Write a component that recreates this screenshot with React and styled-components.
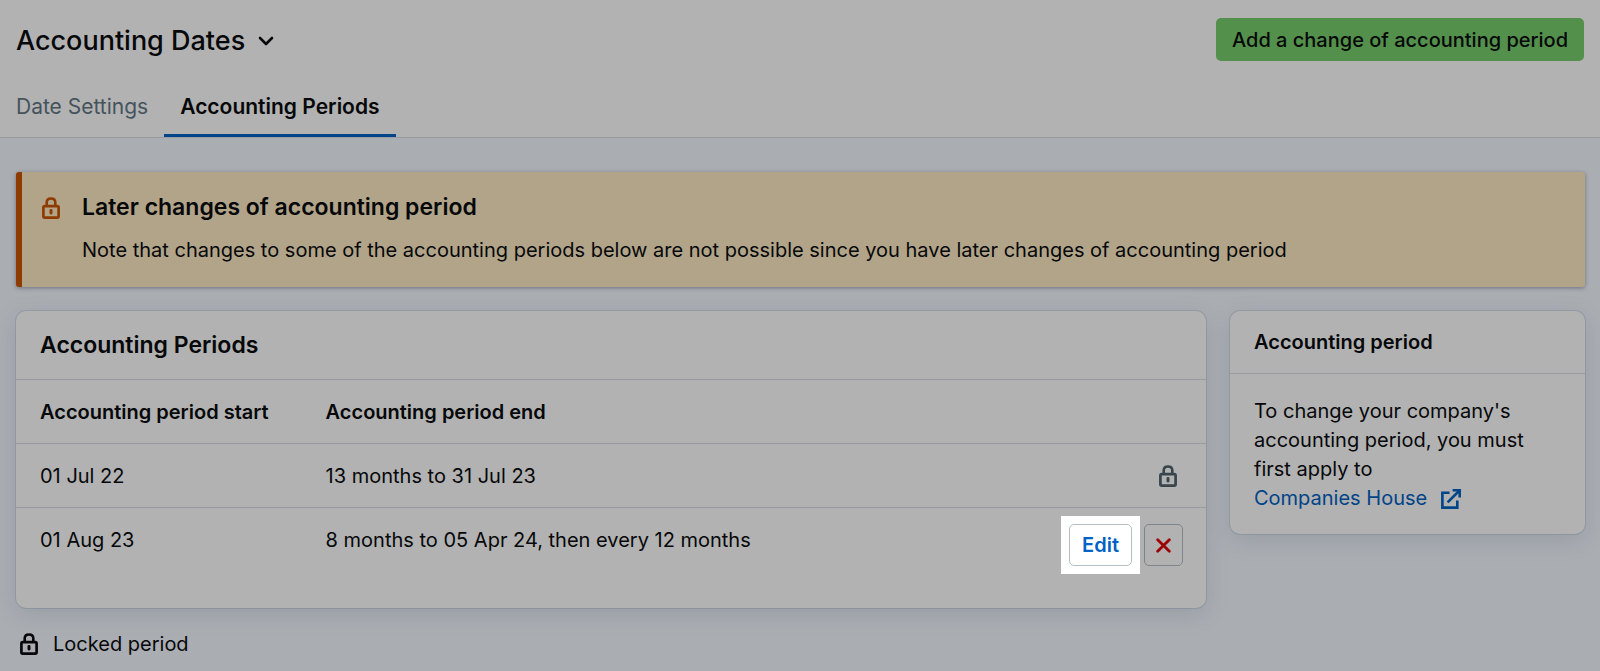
import React from 'react';
import styled, { createGlobalStyle } from 'styled-components';

const colors = {
  text: '#0a0c0e',
  muted: '#637785',
  icon: '#51636f',
  link: '#0062c4',
  line: '#dddfe6',
  page: '#f4f8ff',
  green: '#78cf6c',
  orange: '#cc5500',
  notice: '#ffebc5',
  red: '#e00008',
};

const GlobalStyle = createGlobalStyle`
  *, *::before, *::after {
    box-sizing: border-box;
  }

  body {
    margin: 0;
    background: ${colors.page};
    color: ${colors.text};
    font-family: Inter, 'Liberation Sans', sans-serif;
    font-size: 20px;
    line-height: 28px;
  }

  h1, h2, h3, p {
    margin: 0;
  }

  button {
    font: inherit;
    cursor: pointer;
  }

  svg {
    display: block;
    flex: none;
  }
`;

const Page = styled.div`
  min-height: 100vh;
  overflow: hidden;
`;

const Header = styled.header`
  padding: 18px 16px 0;
  background: #fff;
  border-bottom: 1px solid ${colors.line};
`;

const TitleBar = styled.div`
  display: flex;
  align-items: flex-start;
  justify-content: space-between;
  gap: 24px;
`;

const TitleButton = styled.button`
  display: flex;
  align-items: center;
  gap: 13px;
  padding: 0;
  border: 0;
  background: none;
  color: inherit;
`;

const Title = styled.h1`
  font-size: 27px;
  line-height: 46px;
  font-weight: 500;
`;

const PrimaryButton = styled.button`
  height: 43px;
  padding: 0 16px;
  border: 0;
  border-radius: 5px;
  background: ${colors.green};
  color: ${colors.text};
  font-weight: 500;
`;

const Tabs = styled.nav`
  display: flex;
  margin-top: 15px;
`;

const Tab = styled.a`
  padding: 14px 16px 13px;
  border-bottom: 3px solid ${props => props.$active ? colors.link : 'transparent'};
  color: ${props => props.$active ? colors.text : colors.muted};
  font-size: 21px;
  font-weight: ${props => props.$active ? 600 : 400};
  text-decoration: none;

  &:first-child {
    padding-left: 0;
  }
`;

const Main = styled.main`
  padding: 34px 15px 12px 16px;
`;

const Notice = styled.section`
  display: flex;
  gap: 22px;
  padding: 21px 20px 23px;
  border-left: 6px solid ${colors.orange};
  border-radius: 3px;
  background: ${colors.notice};
  box-shadow: 0 1px 4px rgba(30, 40, 60, 0.4);
`;

const NoticeIcon = styled.div`
  padding-top: 4px;
  color: ${colors.orange};
`;

const NoticeTitle = styled.h2`
  margin-bottom: 15px;
  font-size: 23px;
  line-height: 28px;
  font-weight: 600;
`;

const Columns = styled.div`
  display: grid;
  grid-template-columns: minmax(0, 1fr) 355px;
  align-items: start;
  gap: 24px;
  margin-top: 24px;
`;

const Card = styled.section`
  border-radius: 10px;
  background: #fff;
  box-shadow: 0 0 0 1px rgba(90, 110, 150, 0.16), 0 6px 24px rgba(60, 90, 130, 0.14);
`;

const CardTitle = styled.h2`
  padding: 20px 24px;
  font-size: 23px;
  line-height: 28px;
  font-weight: 600;
`;

const SideTitle = styled.h3`
  padding: 17px 24px;
  border-bottom: 1px solid ${colors.line};
  font-size: 20px;
  font-weight: 600;
`;

const SideText = styled.p`
  padding: 23px 24px 21px;
  line-height: 29px;
`;

const ExternalLink = styled.a`
  display: inline-flex;
  align-items: center;
  gap: 14px;
  color: ${colors.link};
  text-decoration: none;
  white-space: nowrap;
  vertical-align: top;
`;

const Table = styled.table`
  width: 100%;
  border-collapse: collapse;
  table-layout: fixed;

  th, td {
    padding: 18px 24px 17px;
    border-top: 1px solid ${colors.line};
    text-align: left;
    vertical-align: top;
  }

  th {
    font-weight: 600;
  }

  th:first-child {
    width: 24%;
  }

  th:last-child {
    width: 16%;
  }

  td:last-child {
    padding: 8px 23px 17px 0;
  }

  tbody tr:last-child td {
    padding-bottom: 34px;
  }
`;

const RowLock = styled.div`
  display: flex;
  justify-content: flex-end;
  padding: 13px 6px 0 0;
  color: ${colors.icon};
`;

const Actions = styled.div`
  display: flex;
  align-items: center;
  justify-content: flex-end;
  gap: 4px;
`;

// White cut-out around the highlighted control; everything outside is dimmed
const Spotlight = styled.div`
  position: relative;
  z-index: 10;
  padding: 8px;
  background: #fff;
  box-shadow: 0 0 0 200vmax rgba(0, 0, 0, 0.3);
`;

const SmallButton = styled.button`
  display: flex;
  align-items: center;
  justify-content: center;
  height: 42px;
  padding: 0 ${props => props.$danger ? 11 : 12}px;
  border: 1px solid #b3bfc7;
  border-radius: 5px;
  background: #fff;
  color: ${props => props.$danger ? colors.red : colors.link};
  font-weight: 600;
`;

const Legend = styled.div`
  display: flex;
  align-items: center;
  gap: 15px;
  margin-top: 22px;
  padding-left: 4px;
`;

const LockIcon = () => (
  <svg width="18" height="22" viewBox="0 0 18 22" fill="none" aria-hidden="true">
    <rect x="1.4" y="9.1" width="15.2" height="11.5" rx="1.4" stroke="currentColor" strokeWidth="2.7" />
    <path d="M4.7 9V5.6C4.7 3.1 6.5 1.5 9 1.5s4.3 1.6 4.3 4.1V9" stroke="currentColor" strokeWidth="2.6" />
    <rect x="7.5" y="12.1" width="3" height="5.3" rx="1.3" fill="currentColor" />
  </svg>
);

const ChevronIcon = () => (
  <svg width="16" height="10" viewBox="0 0 16 10" fill="none" aria-hidden="true">
    <path d="M2 2l6 6 6-6" stroke="currentColor" strokeWidth="2.6" strokeLinecap="round" strokeLinejoin="round" />
  </svg>
);

const CrossIcon = () => (
  <svg width="15" height="15" viewBox="0 0 15 15" fill="none" aria-hidden="true">
    <path d="M1.7 1.7l11.6 11.6M13.3 1.7L1.7 13.3" stroke="currentColor" strokeWidth="2.8" strokeLinecap="round" />
  </svg>
);

const ExternalIcon = () => (
  <svg width="20" height="20" viewBox="0 0 20 20" fill="none" aria-hidden="true">
    <path d="M8.5 3.7H1.4v14.9h14.9v-7.1" stroke="currentColor" strokeWidth="2.6" />
    <path d="M6.6 13.4L18 2" stroke="currentColor" strokeWidth="2.6" />
    <path d="M11.6 1.3h7.1v7.1" stroke="currentColor" strokeWidth="2.6" />
  </svg>
);

const App = () => (
  <Page>
    <GlobalStyle />
    <Header>
      <TitleBar>
        <TitleButton type="button">
          <Title>Accounting Dates</Title>
          <ChevronIcon />
        </TitleButton>
        <PrimaryButton type="button">Add a change of accounting period</PrimaryButton>
      </TitleBar>
      <Tabs>
        <Tab href="#settings">Date Settings</Tab>
        <Tab href="#periods" $active aria-current="page">Accounting Periods</Tab>
      </Tabs>
    </Header>
    <Main>
      <Notice>
        <NoticeIcon><LockIcon /></NoticeIcon>
        <div>
          <NoticeTitle>Later changes of accounting period</NoticeTitle>
          <p>
            Note that changes to some of the accounting periods below are not possible since
            you have later changes of accounting period
          </p>
        </div>
      </Notice>
      <Columns>
        <Card>
          <CardTitle>Accounting Periods</CardTitle>
          <Table>
            <thead>
              <tr>
                <th scope="col">Accounting period start</th>
                <th scope="col">Accounting period end</th>
                <th aria-label="Actions" />
              </tr>
            </thead>
            <tbody>
              <tr>
                <td>01 Jul 22</td>
                <td>13 months to 31 Jul 23</td>
                <td><RowLock><LockIcon /></RowLock></td>
              </tr>
              <tr>
                <td>01 Aug 23</td>
                <td>8 months to 05 Apr 24, then every 12 months</td>
                <td>
                  <Actions>
                    <Spotlight>
                      <SmallButton type="button">Edit</SmallButton>
                    </Spotlight>
                    <SmallButton type="button" $danger aria-label="Delete">
                      <CrossIcon />
                    </SmallButton>
                  </Actions>
                </td>
              </tr>
            </tbody>
          </Table>
        </Card>
        <Card as="aside">
          <SideTitle>Accounting period</SideTitle>
          <SideText>
            To change your company's accounting period, you must first apply to{' '}
            <ExternalLink href="#companies-house">
              Companies House
              <ExternalIcon />
            </ExternalLink>
          </SideText>
        </Card>
      </Columns>
      <Legend>
        <LockIcon />
        <span>Locked period</span>
      </Legend>
    </Main>
  </Page>
);

export default App;
